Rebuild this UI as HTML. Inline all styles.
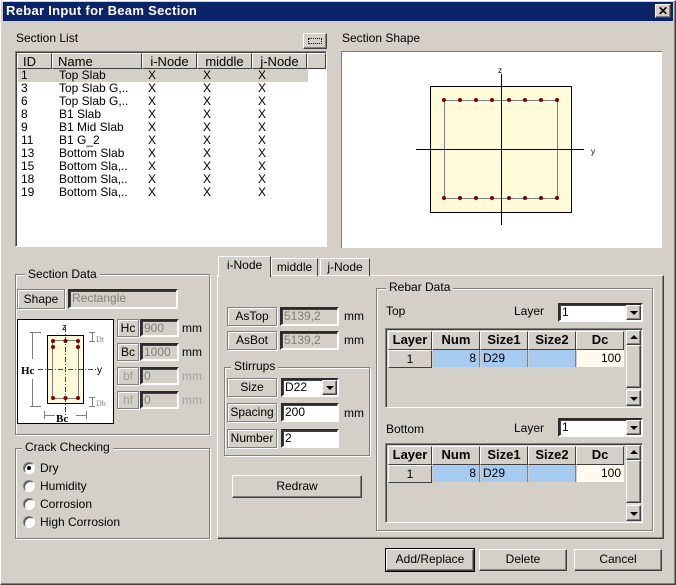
<!DOCTYPE html>
<html><head><meta charset="utf-8"><style>
*{box-sizing:border-box;margin:0;padding:0}
body{width:676px;height:585px;background:#d4d0c8;font-family:"Liberation Sans","Noto Sans CJK KR",sans-serif;font-size:12px;color:#000;position:relative;overflow:hidden}
.a{position:absolute}
.win{left:0;top:0;width:676px;height:585px;border:1px solid #fff;border-right-color:#404040;border-bottom-color:#404040;box-shadow:inset -1px -1px 0 #808080,inset 1px 1px 0 #d4d0c8}
.title{left:3px;top:2px;width:670px;height:19px;background:#0a246a;color:#fff;font-weight:bold;font-size:13px;padding:1px 0 0 3px;letter-spacing:.3px}
.grp{border:1px solid #808080;box-shadow:1px 1px 0 #fff,inset 1px 1px 0 #fff}
.lbl{background:#d4d0c8;padding:0 3px}
.sunk{border:1px solid #808080;border-right-color:#fff;border-bottom-color:#fff;box-shadow:inset 1px 1px 0 #404040}
.lbx{border:1px solid #808080;text-align:center;line-height:16px;box-shadow:inset 1px 1px 0 #fff,1px 1px 0 #fff}
.in{background:#fff;border:2px inset #fff;border-color:#808080 #fff #fff #808080;box-shadow:inset 1px 1px 0 #404040;padding-left:2px;line-height:14px}
.dis{background:#d4d0c8;color:#808080}
.btn{background:#d4d0c8;border:1px solid #fff;border-right-color:#404040;border-bottom-color:#404040;box-shadow:inset -1px -1px 0 #808080;text-align:center}
.hd{background:#d4d0c8;border:1px solid #fff;border-right-color:#404040;border-bottom-color:#404040;font-weight:bold;text-align:center;line-height:16px;font-size:13px}
.arr{width:0;height:0;border-left:4px solid transparent;border-right:4px solid transparent;border-top:4px solid #000}
.arru{width:0;height:0;border-left:4px solid transparent;border-right:4px solid transparent;border-bottom:4px solid #000}
.rad{width:12px;height:12px;border-radius:50%;background:#fff;border:1px solid #808080;border-right-color:#fff;border-bottom-color:#fff;box-shadow:inset 1px 1px 0 #404040}
.row{position:absolute;left:0;height:13px;line-height:13px;width:290px}
.row span{position:absolute}
</style></head><body>
<div class="a win"></div>
<div class="a title">Rebar Input for Beam Section</div>
<div class="a btn" style="left:655px;top:4px;width:16px;height:14px;font-weight:bold;font-size:12px;line-height:12px">✕</div>

<div class="a" style="left:16px;top:31px">Section List</div>
<div class="a btn" style="left:303px;top:33px;width:24px;height:16px"><div class="a" style="left:4px;top:4px;width:14px;height:6px;border:1px dotted #000"></div></div>
<div class="a sunk" style="left:15px;top:51px;width:312px;height:196px;background:#fff">
 <div class="a hd" style="left:1px;top:1px;width:35px;height:16px;font-weight:normal;text-align:left;padding-left:5px">ID</div>
 <div class="a hd" style="left:36px;top:1px;width:90px;height:16px;font-weight:normal;text-align:left;padding-left:5px">Name</div>
 <div class="a hd" style="left:126px;top:1px;width:55px;height:16px;font-weight:normal">i-Node</div>
 <div class="a hd" style="left:181px;top:1px;width:55px;height:16px;font-weight:normal">middle</div>
 <div class="a hd" style="left:236px;top:1px;width:55px;height:16px;font-weight:normal">j-Node</div>
 <div class="a hd" style="left:291px;top:1px;width:19px;height:16px"></div>
 <div class="a" style="left:2px;top:17px;width:290px;height:13px;background:#d4d0c8"></div>
 <div class="a" style="left:0;top:17px;width:300px">
  <div class="row" style="top:0"><span style="left:5px">1</span><span style="left:43px">Top Slab</span><span style="left:132px">X</span><span style="left:187px">X</span><span style="left:242px">X</span></div>
  <div class="row" style="top:13px"><span style="left:5px">3</span><span style="left:43px">Top Slab G,..</span><span style="left:132px">X</span><span style="left:187px">X</span><span style="left:242px">X</span></div>
  <div class="row" style="top:26px"><span style="left:5px">6</span><span style="left:43px">Top Slab G,..</span><span style="left:132px">X</span><span style="left:187px">X</span><span style="left:242px">X</span></div>
  <div class="row" style="top:39px"><span style="left:5px">8</span><span style="left:43px">B1 Slab</span><span style="left:132px">X</span><span style="left:187px">X</span><span style="left:242px">X</span></div>
  <div class="row" style="top:52px"><span style="left:5px">9</span><span style="left:43px">B1 Mid Slab</span><span style="left:132px">X</span><span style="left:187px">X</span><span style="left:242px">X</span></div>
  <div class="row" style="top:65px"><span style="left:5px">11</span><span style="left:43px">B1 G_2</span><span style="left:132px">X</span><span style="left:187px">X</span><span style="left:242px">X</span></div>
  <div class="row" style="top:78px"><span style="left:5px">13</span><span style="left:43px">Bottom Slab</span><span style="left:132px">X</span><span style="left:187px">X</span><span style="left:242px">X</span></div>
  <div class="row" style="top:91px"><span style="left:5px">15</span><span style="left:43px">Bottom Sla,..</span><span style="left:132px">X</span><span style="left:187px">X</span><span style="left:242px">X</span></div>
  <div class="row" style="top:104px"><span style="left:5px">18</span><span style="left:43px">Bottom Sla,..</span><span style="left:132px">X</span><span style="left:187px">X</span><span style="left:242px">X</span></div>
  <div class="row" style="top:117px"><span style="left:5px">19</span><span style="left:43px">Bottom Sla,..</span><span style="left:132px">X</span><span style="left:187px">X</span><span style="left:242px">X</span></div>
 </div>
</div>

<div class="a" style="left:342px;top:31px">Section Shape</div>
<div class="a" style="left:341px;top:51px;width:321px;height:197px;background:#fff;border-top:1px solid #808080;border-left:1px solid #808080"></div>
<svg class="a" style="left:338px;top:25px" width="338" height="230">
 <rect x="92.5" y="61.5" width="141" height="126" fill="#fffad8" stroke="#000" stroke-width="1"/>
 <rect x="106.5" y="75.5" width="113" height="98" fill="none" stroke="#808080"/>
 <line x1="163.5" y1="49" x2="163.5" y2="200" stroke="#000"/>
 <line x1="78" y1="124.5" x2="246" y2="124.5" stroke="#000"/>
 <text x="160" y="48" font-size="8" font-family="Liberation Sans">z</text>
 <text x="253" y="129" font-size="8" font-family="Liberation Sans">y</text>
 <g fill="#800000">
 <circle cx="106" cy="75" r="2"/><circle cx="122" cy="75" r="2"/><circle cx="138" cy="75" r="2"/><circle cx="154" cy="75" r="2"/><circle cx="171" cy="75" r="2"/><circle cx="187" cy="75" r="2"/><circle cx="203" cy="75" r="2"/><circle cx="219" cy="75" r="2"/>
 <circle cx="106" cy="173" r="2"/><circle cx="122" cy="173" r="2"/><circle cx="138" cy="173" r="2"/><circle cx="154" cy="173" r="2"/><circle cx="171" cy="173" r="2"/><circle cx="187" cy="173" r="2"/><circle cx="203" cy="173" r="2"/><circle cx="219" cy="173" r="2"/>
 </g>
</svg>

<div class="a grp" style="left:15px;top:274px;width:195px;height:161px"></div>
<div class="a lbl" style="left:25px;top:267px">Section Data</div>
<div class="a lbx" style="left:17px;top:289px;width:48px;height:20px;line-height:18px">Shape</div>
<div class="a in dis" style="left:68px;top:289px;width:110px;height:20px">Rectangle</div>
<div class="a" style="left:17px;top:319px;width:97px;height:105px;background:#fff;border:1px solid #000"></div>
<svg class="a" style="left:17px;top:319px" width="97" height="105">
 <rect x="30.5" y="16.5" width="36" height="68" fill="#fffad8" stroke="#000"/>
 <rect x="35.5" y="21.5" width="26" height="58" fill="none" stroke="#808080"/>
 <line x1="48.5" y1="8" x2="48.5" y2="96" stroke="#e00" stroke-dasharray="5,2,1,2"/>
 <line x1="21" y1="50.5" x2="80" y2="50.5" stroke="#e00" stroke-dasharray="5,2,1,2"/>
 <text x="45" y="11" font-size="9" font-family="Liberation Sans">z</text>
 <text x="80" y="54" font-size="10" font-family="Liberation Sans">y</text>
 <text x="4" y="55" font-size="11" font-weight="bold" font-family="Liberation Serif">Hc</text>
 <text x="39" y="103" font-size="11" font-weight="bold" font-family="Liberation Serif">Bc</text>
 <line x1="13" y1="13.5" x2="24" y2="13.5" stroke="#808080"/><line x1="13" y1="87.5" x2="24" y2="87.5" stroke="#808080"/>
 <line x1="15.5" y1="14" x2="15.5" y2="40" stroke="#808080"/><line x1="15.5" y1="60" x2="15.5" y2="87" stroke="#808080"/>
 <line x1="28" y1="96.5" x2="38" y2="96.5" stroke="#808080"/><line x1="59" y1="96.5" x2="69" y2="96.5" stroke="#808080"/>
 <line x1="27.5" y1="92" x2="27.5" y2="100" stroke="#808080"/><line x1="69.5" y1="92" x2="69.5" y2="100" stroke="#808080"/>
 <line x1="72" y1="13.5" x2="78" y2="13.5" stroke="#808080"/><line x1="72" y1="22.5" x2="78" y2="22.5" stroke="#808080"/><line x1="75.5" y1="13" x2="75.5" y2="23" stroke="#808080"/>
 <line x1="72" y1="78.5" x2="78" y2="78.5" stroke="#808080"/><line x1="72" y1="87.5" x2="78" y2="87.5" stroke="#808080"/><line x1="75.5" y1="78" x2="75.5" y2="88" stroke="#808080"/>
 <text x="79" y="23" font-size="8" fill="#808080" font-family="Liberation Serif">Dt</text>
 <text x="79" y="87" font-size="8" fill="#808080" font-family="Liberation Serif">Db</text>
 <g fill="#800000"><circle cx="36" cy="22" r="2"/><circle cx="48.5" cy="22" r="2"/><circle cx="61" cy="22" r="2"/><circle cx="36" cy="28" r="2"/><circle cx="61" cy="28" r="2"/><circle cx="36" cy="79" r="2"/><circle cx="48.5" cy="79" r="2"/><circle cx="61" cy="79" r="2"/></g>
</svg>
<div class="a lbx" style="left:117px;top:319px;width:22px;height:18px">Hc</div><div class="a in dis" style="left:140px;top:319px;width:39px;height:18px">900</div><div class="a" style="left:182px;top:321px">mm</div>
<div class="a lbx" style="left:117px;top:343px;width:22px;height:18px">Bc</div><div class="a in dis" style="left:140px;top:343px;width:39px;height:18px">1000</div><div class="a" style="left:182px;top:345px">mm</div>
<div class="a lbx" style="left:117px;top:367px;width:22px;height:18px;color:#a0a0a0">bf</div><div class="a in dis" style="left:140px;top:367px;width:39px;height:18px">0</div><div class="a" style="left:182px;top:369px;color:#a0a0a0">mm</div>
<div class="a lbx" style="left:117px;top:391px;width:22px;height:18px;color:#a0a0a0">hf</div><div class="a in dis" style="left:140px;top:391px;width:39px;height:18px">0</div><div class="a" style="left:182px;top:393px;color:#a0a0a0">mm</div>

<div class="a grp" style="left:15px;top:448px;width:195px;height:91px"></div>
<div class="a lbl" style="left:22px;top:440px">Crack Checking</div>
<div class="a rad" style="left:23px;top:462px"><div class="a" style="left:3px;top:3px;width:4px;height:4px;background:#000;border-radius:50%"></div></div><div class="a" style="left:40px;top:461px">Dry</div>
<div class="a rad" style="left:23px;top:480px"></div><div class="a" style="left:40px;top:479px">Humidity</div>
<div class="a rad" style="left:23px;top:498px"></div><div class="a" style="left:40px;top:497px">Corrosion</div>
<div class="a rad" style="left:23px;top:516px"></div><div class="a" style="left:40px;top:515px">High Corrosion</div>

<div class="a" style="left:217px;top:275px;width:447px;height:264px;border:1px solid #fff;border-right-color:#404040;border-bottom-color:#404040;box-shadow:inset -1px -1px 0 #808080"></div>
<div class="a" style="left:271px;top:258px;width:47px;height:18px;border:1px solid #fff;border-bottom:none;border-right-color:#404040;text-align:center;line-height:16px">middle</div>
<div class="a" style="left:320px;top:258px;width:50px;height:18px;border:1px solid #fff;border-bottom:none;border-right-color:#404040;text-align:center;line-height:16px">j-Node</div>
<div class="a" style="left:218px;top:256px;width:53px;height:21px;border:1px solid #fff;border-bottom:none;border-right-color:#404040;background:#d4d0c8;text-align:center;line-height:16px">i-Node</div>

<div class="a lbx" style="left:227px;top:307px;width:50px;height:19px">AsTop</div><div class="a in dis" style="left:280px;top:307px;width:59px;height:19px">5139,2</div><div class="a" style="left:344px;top:309px">mm</div>
<div class="a lbx" style="left:227px;top:331px;width:50px;height:19px">AsBot</div><div class="a in dis" style="left:280px;top:331px;width:59px;height:19px">5139,2</div><div class="a" style="left:344px;top:333px">mm</div>

<div class="a grp" style="left:224px;top:367px;width:146px;height:89px"></div>
<div class="a lbl" style="left:231px;top:359px">Stirrups</div>
<div class="a lbx" style="left:227px;top:378px;width:50px;height:19px">Size</div>
<div class="a in" style="left:281px;top:378px;width:58px;height:19px">D22</div>
<div class="a btn" style="left:322px;top:380px;width:15px;height:15px"><div class="a arr" style="left:3px;top:5px"></div></div>
<div class="a lbx" style="left:227px;top:403px;width:50px;height:19px">Spacing</div><div class="a in" style="left:281px;top:403px;width:58px;height:19px">200</div><div class="a" style="left:344px;top:406px">mm</div>
<div class="a lbx" style="left:227px;top:429px;width:50px;height:19px">Number</div><div class="a in" style="left:281px;top:429px;width:58px;height:19px">2</div>

<div class="a btn" style="left:232px;top:475px;width:130px;height:23px;line-height:20px">Redraw</div>

<div class="a grp" style="left:376px;top:288px;width:277px;height:243px"></div>
<div class="a lbl" style="left:386px;top:280px">Rebar Data</div>

<div class="a" style="left:386px;top:304px">Top</div>
<div class="a" style="left:514px;top:304px">Layer</div>
<div class="a in" style="left:558px;top:303px;width:85px;height:19px">1</div>
<div class="a btn" style="left:626px;top:305px;width:15px;height:15px"><div class="a arr" style="left:3px;top:5px"></div></div>
<div class="a sunk" style="left:385px;top:328px;width:258px;height:80px"></div>
<div class="a hd" style="left:388px;top:331px;width:44px;height:19px">Layer</div>
<div class="a hd" style="left:432px;top:331px;width:48px;height:19px">Num</div>
<div class="a hd" style="left:480px;top:331px;width:48px;height:19px">Size1</div>
<div class="a hd" style="left:528px;top:331px;width:48px;height:19px">Size2</div>
<div class="a hd" style="left:576px;top:331px;width:48px;height:19px">Dc</div>
<div class="a hd" style="left:388px;top:350px;width:44px;height:18px;font-weight:normal;font-size:12px">1</div>
<div class="a" style="left:433px;top:350px;width:47px;height:17px;background:#a6caf0;text-align:right;padding-right:3px;line-height:17px;border-right:1px solid #808080">8</div>
<div class="a" style="left:481px;top:350px;width:47px;height:17px;background:#a6caf0;padding-left:2px;line-height:17px;border-right:1px solid #808080">D29</div>
<div class="a" style="left:529px;top:350px;width:47px;height:17px;background:#a6caf0;border-right:1px solid #808080"></div>
<div class="a" style="left:577px;top:350px;width:47px;height:17px;background:#fffaf0;text-align:right;padding-right:3px;line-height:17px">100</div>
<div class="a" style="left:626px;top:330px;width:15px;height:76px;background:#e0ddd6"></div>
<div class="a btn" style="left:626px;top:330px;width:15px;height:15px"><div class="a arru" style="left:3px;top:4px"></div></div>
<div class="a btn" style="left:626px;top:345px;width:15px;height:43px"></div>
<div class="a btn" style="left:626px;top:390px;width:15px;height:16px"><div class="a arr" style="left:3px;top:6px"></div></div>

<div class="a" style="left:386px;top:422px">Bottom</div>
<div class="a" style="left:514px;top:421px">Layer</div>
<div class="a in" style="left:558px;top:418px;width:85px;height:19px">1</div>
<div class="a btn" style="left:626px;top:420px;width:15px;height:15px"><div class="a arr" style="left:3px;top:5px"></div></div>
<div class="a sunk" style="left:385px;top:443px;width:258px;height:80px"></div>
<div class="a hd" style="left:388px;top:446px;width:44px;height:19px">Layer</div>
<div class="a hd" style="left:432px;top:446px;width:48px;height:19px">Num</div>
<div class="a hd" style="left:480px;top:446px;width:48px;height:19px">Size1</div>
<div class="a hd" style="left:528px;top:446px;width:48px;height:19px">Size2</div>
<div class="a hd" style="left:576px;top:446px;width:48px;height:19px">Dc</div>
<div class="a hd" style="left:388px;top:465px;width:44px;height:18px;font-weight:normal;font-size:12px">1</div>
<div class="a" style="left:433px;top:465px;width:47px;height:17px;background:#a6caf0;text-align:right;padding-right:3px;line-height:17px;border-right:1px solid #808080">8</div>
<div class="a" style="left:481px;top:465px;width:47px;height:17px;background:#a6caf0;padding-left:2px;line-height:17px;border-right:1px solid #808080">D29</div>
<div class="a" style="left:529px;top:465px;width:47px;height:17px;background:#a6caf0;border-right:1px solid #808080"></div>
<div class="a" style="left:577px;top:465px;width:47px;height:17px;background:#fffaf0;text-align:right;padding-right:3px;line-height:17px">100</div>
<div class="a" style="left:626px;top:445px;width:15px;height:76px;background:#e0ddd6"></div>
<div class="a btn" style="left:626px;top:445px;width:15px;height:15px"><div class="a arru" style="left:3px;top:4px"></div></div>
<div class="a btn" style="left:626px;top:460px;width:15px;height:43px"></div>
<div class="a btn" style="left:626px;top:505px;width:15px;height:16px"><div class="a arr" style="left:3px;top:6px"></div></div>

<div class="a btn" style="left:386px;top:549px;width:88px;height:22px;line-height:19px;outline:1px solid #000">Add/Replace</div>
<div class="a btn" style="left:479px;top:549px;width:88px;height:22px;line-height:19px">Delete</div>
<div class="a btn" style="left:574px;top:549px;width:88px;height:22px;line-height:19px">Cancel</div>
</body></html>
